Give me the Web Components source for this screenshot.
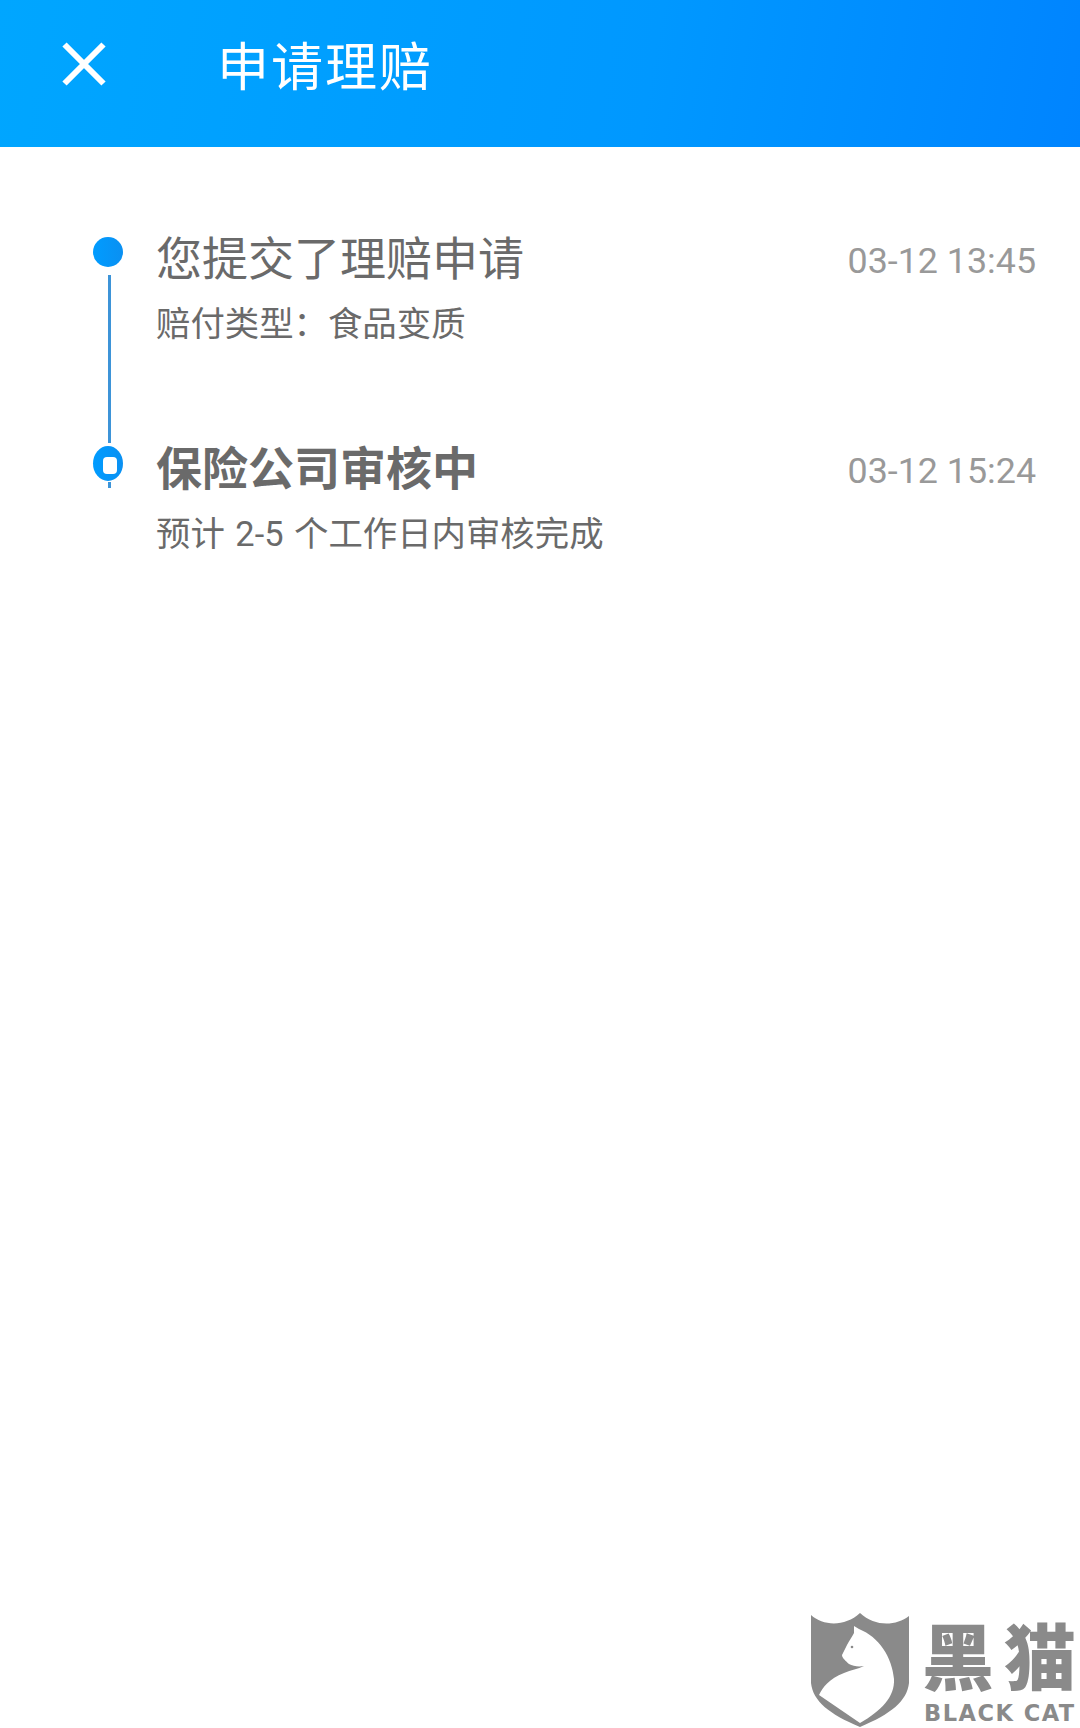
<!DOCTYPE html>
<html lang="zh">
<head>
<meta charset="utf-8">
<title>申请理赔</title>
<style>
html, body { margin: 0; padding: 0; height: 100%; background: #fff; }
body { width: 1080px; height: 1728px; overflow: hidden; position: relative; font-family: "Noto Sans CJK SC", sans-serif; }
</style>
</head>
<body>
<claim-header>申请理赔</claim-header>
<claim-timeline>
    <claim-step time="03-12 13:45" line>
        <span slot="title">您提交了理赔申请</span>
        赔付类型：食品变质
    </claim-step>
    <claim-step time="03-12 15:24" active>
        <span slot="title">保险公司审核中</span>
        预计 2-5 个工作日内审核完成
    </claim-step>
</claim-timeline>
<black-cat-mark></black-cat-mark>

<script>
class ClaimHeader extends HTMLElement {
    constructor() {
        super();
        let shadowRoot = this.attachShadow({mode: 'open'});
        shadowRoot.innerHTML = `
<style>
    :host {
        display: flex;
        align-items: center;
        height: 147px;
        padding: 0 0 20px 62px;
        box-sizing: border-box;
        background: linear-gradient(100deg, #00a6ff 0%, #0098ff 60%, #0084ff 100%);
        color: #fff;
    }
    svg { width: 44px; height: 44px; flex: none; display: block; }
    .title {
        margin-left: 111px;
        font: 400 52px/1 "Noto Sans CJK SC", sans-serif;
        letter-spacing: 2px;
    }
</style>
<svg viewBox="0 0 44 44"><path d="M2.5 2.5 L41.5 41.5 M41.5 2.5 L2.5 41.5" stroke="#fff" stroke-width="6" fill="none"/></svg>
<div class="title"><slot></slot></div>`;
    }
}

class ClaimTimeline extends HTMLElement {
    constructor() {
        super();
        let shadowRoot = this.attachShadow({mode: 'open'});
        shadowRoot.innerHTML = `
<style>
    :host { display: block; padding: 83px 44px 0 93px; }
</style>
<slot></slot>`;
    }
}

class ClaimStep extends HTMLElement {
    constructor() {
        super();
        let shadowRoot = this.attachShadow({mode: 'open'});
        let active = this.hasAttribute('active');
        shadowRoot.innerHTML = `
<style>
    :host { display: grid; grid-template-columns: 63px 1fr auto; height: 210px; color: #6a6a6a; }
    .rail { display: flex; flex-direction: column; align-items: flex-start; }
    .dot {
        width: 30px; height: ${active ? 35 : 30}px; border-radius: 50%;
        margin-top: ${active ? 6 : 7}px; flex: none;
        background: linear-gradient(90deg, #009cff, #0a90f2);
        display: flex; align-items: center; justify-content: center;
    }
    .dot i { display: block; width: 14px; height: 17px; border-radius: 4px; background: #fff; margin-left: 3px; margin-top: 4px; }
    .line { width: 3px; margin-left: 15px; background: #3d94d8; flex: none; }
    .title {
        font: ${active ? 700 : 400} 46px/50px "Noto Sans CJK SC", sans-serif;
        height: 50px;
        white-space: nowrap;
    }
    .sub {
        font: 400 34.4px/44px Roboto, "Noto Sans CJK SC", sans-serif;
        margin-top: 22px;
        white-space: nowrap;
        word-spacing: 2px;
    }
    .time { font: 400 35.8px/50px Roboto, sans-serif; color: #999; white-space: nowrap; padding-top: 6px; }
</style>
<div class="rail">
    <div class="dot">${active ? '<i></i>' : ''}</div>
    ${active ? '<div class="line" style="height:6px;margin-top:1px"></div>' : '<div class="line" style="height:168px;margin-top:8px"></div>'}
</div>
<div class="main">
    <div class="title"><slot name="title"></slot></div>
    <div class="sub"><slot></slot></div>
</div>
<div class="time">${this.getAttribute('time')}</div>`;
    }
}

class BlackCatMark extends HTMLElement {
    constructor() {
        super();
        let shadowRoot = this.attachShadow({mode: 'open'});
        shadowRoot.innerHTML = `
<style>
    :host {
        position: absolute; right: 0; bottom: 0;
        width: 269px; height: 115px;
        color: #8a8a8a;
        display: block;
    }
    svg { position: absolute; left: 0; top: 0; width: 98px; height: 114px; }
    .cn {
        position: absolute; left: 111px; top: 8px;
        font: 900 72px/76px "Liberation Sans", "Noto Sans CJK SC", sans-serif;
        white-space: nowrap;
    }
    .cn span { letter-spacing: 10px; }
    .en {
        position: absolute; left: 113px; top: 87.5px;
        font: 700 22.5px/24px "DejaVu Sans", sans-serif;
        letter-spacing: 1.5px;
        white-space: nowrap;
    }
</style>
<svg viewBox="0 0 98 114">
    <path fill="#8a8a8a" d="M0 2 C12 13 34 14 49 0 C64 14 85 13 98 3 L98 70 C96 88 80 101 49 114 C18 101 2 88 0 70 Z"/>
    <path fill="#fff" d="M43 13 L48 16 C68 24 81 44 83 66 C84 84 70 98 49 110 L8 82 C12 74 18 66 33 60 C40 57 47 56 53 53 C47 54 42 53 38 51 C35 48 31 45 31 42 L36 32 C38 28 41 24 43 20 Z"/>
    <circle cx="41" cy="34" r="1.3" fill="#8a8a8a"/>
</svg>
<div class="cn"><span>黑</span>猫</div>
<div class="en">BLACK CAT</div>`;
    }
}

window.customElements.define('claim-header', ClaimHeader);
window.customElements.define('claim-timeline', ClaimTimeline);
window.customElements.define('claim-step', ClaimStep);
window.customElements.define('black-cat-mark', BlackCatMark);
</script>
</body>
</html>
